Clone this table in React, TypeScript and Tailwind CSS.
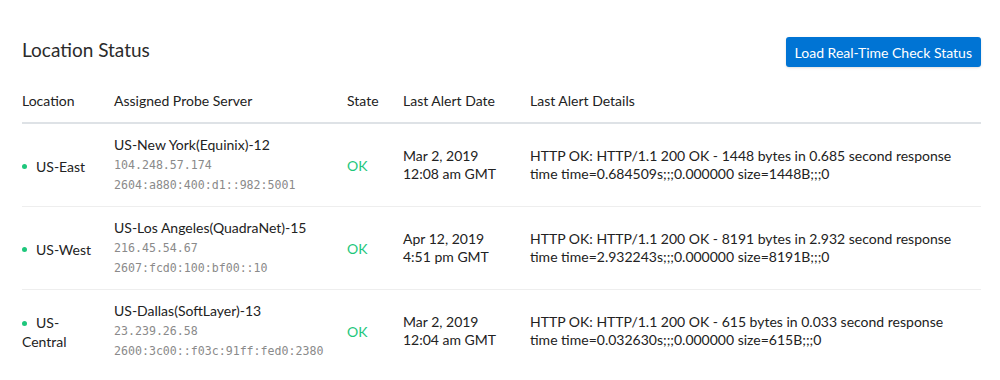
import React from 'react';

interface Row {
  location: string;
  server: string;
  ipv4: string;
  ipv6: string;
  state: string;
  date: string;
  time: string;
  details: string;
}

const rows: Row[] = [
  {
    location: 'US-East',
    server: 'US-New York(Equinix)-12',
    ipv4: '104.248.57.174',
    ipv6: '2604:a880:400:d1::982:5001',
    state: 'OK',
    date: 'Mar 2, 2019',
    time: '12:08 am GMT',
    details: 'HTTP OK: HTTP/1.1 200 OK - 1448 bytes in 0.685 second response time time=0.684509s;;;0.000000 size=1448B;;;0',
  },
  {
    location: 'US-West',
    server: 'US-Los Angeles(QuadraNet)-15',
    ipv4: '216.45.54.67',
    ipv6: '2607:fcd0:100:bf00::10',
    state: 'OK',
    date: 'Apr 12, 2019',
    time: '4:51 pm GMT',
    details: 'HTTP OK: HTTP/1.1 200 OK - 8191 bytes in 2.932 second response time time=2.932243s;;;0.000000 size=8191B;;;0',
  },
  {
    location: 'US-Central',
    server: 'US-Dallas(SoftLayer)-13',
    ipv4: '23.239.26.58',
    ipv6: '2600:3c00::f03c:91ff:fed0:2380',
    state: 'OK',
    date: 'Mar 2, 2019',
    time: '12:04 am GMT',
    details: 'HTTP OK: HTTP/1.1 200 OK - 615 bytes in 0.033 second response time time=0.032630s;;;0.000000 size=615B;;;0',
  },
];

export default function App() {
  return (
    <div className="w-[1000px] h-[380px] bg-white pl-[22px] pr-[19px] pt-[37px] text-[#222] font-['Lato','Open_Sans',sans-serif] overflow-hidden">
      {/* Title + action */}
      <div className="flex items-center justify-between h-[30px]">
        <h2 className="text-[19px] text-[#2b2b2b] leading-none -mt-[5px]">Location Status</h2>
        <button className="h-[30px] px-[9px] bg-[#0074d4] rounded-[3px] text-white text-[14px] shadow-sm">
          Load Real-Time Check Status
        </button>
      </div>

      <table className="mt-[16px] w-full border-collapse table-fixed text-[14px]">
        <colgroup>
          <col className="w-[92px]" />
          <col className="w-[233px]" />
          <col className="w-[56px]" />
          <col className="w-[127px]" />
          <col />
        </colgroup>
        <thead>
          <tr className="h-[40px] border-b-2 border-[#dee2e6] text-left">
            <th className="font-normal align-middle pb-[4px]">Location</th>
            <th className="font-normal align-middle pb-[4px]">Assigned Probe Server</th>
            <th className="font-normal align-middle pb-[4px]">State</th>
            <th className="font-normal align-middle pb-[4px]">Last Alert Date</th>
            <th className="font-normal align-middle pb-[4px]">Last Alert Details</th>
          </tr>
        </thead>
        <tbody>
          {rows.map((r, i) => (
            <tr key={r.server} className={i < rows.length - 1 ? 'border-b border-[#eeeeee]' : ''}>
              <td className="align-middle pr-[14px] leading-[19px] pt-[2px]">
                <span className="inline-block w-[5px] h-[5px] rounded-full bg-[#1ec77c] mr-[9px] align-middle relative -top-[1px]"></span>
                {r.location}
              </td>
              <td className="align-middle py-[11px]">
                <div className="leading-[20px]">{r.server}</div>
                <div className="font-['DejaVu_Sans_Mono',monospace] text-[11.6px] text-[#8a8a8a] leading-[20px]">{r.ipv4}</div>
                <div className="font-['DejaVu_Sans_Mono',monospace] text-[11.6px] text-[#8a8a8a] leading-[20px]">{r.ipv6}</div>
              </td>
              <td className="align-middle text-[#1ec77c]">{r.state}</td>
              <td className="align-middle leading-[18px]">
                <div>{r.date}</div>
                <div>{r.time}</div>
              </td>
              <td className="align-middle leading-[18px] pr-[16px]">{r.details}</td>
            </tr>
          ))}
        </tbody>
      </table>
    </div>
  );
}
